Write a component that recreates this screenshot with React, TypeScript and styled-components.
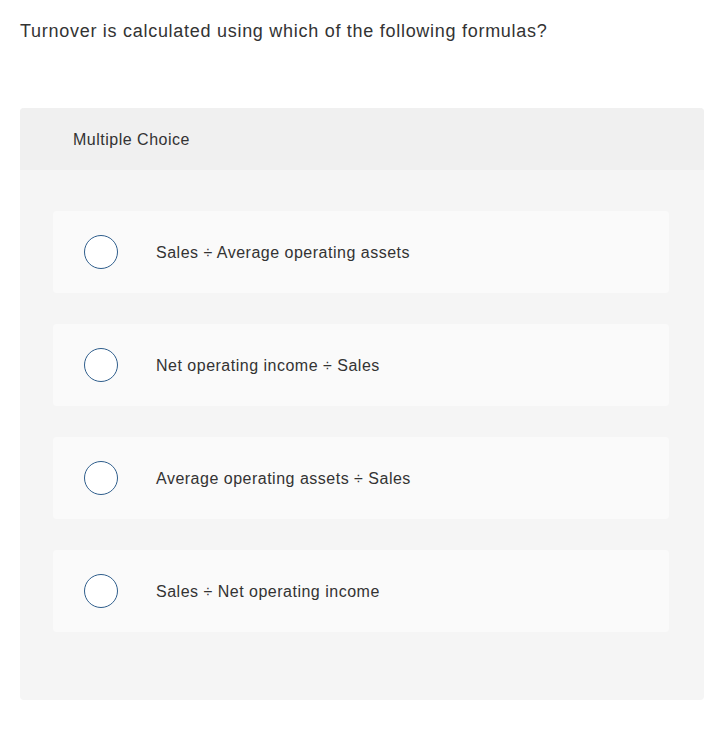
import styled, { createGlobalStyle } from "styled-components";

const GlobalStyle = createGlobalStyle`
  body {
    margin: 0;
    background: #ffffff;
    font-family: "Liberation Sans", Arial, sans-serif;
    color: #333333;
  }
`;

const options = [
  "Sales ÷ Average operating assets",
  "Net operating income ÷ Sales",
  "Average operating assets ÷ Sales",
  "Sales ÷ Net operating income",
];

const App = () => {
  return (
    <Page>
      <GlobalStyle />
      <Question>Turnover is calculated using which of the following formulas?</Question>
      <Panel>
        <PanelHeader>Multiple Choice</PanelHeader>
        <OptionList>
          {options.map((text) => (
            <OptionCard key={text}>
              <Radio />
              <OptionText>{text}</OptionText>
            </OptionCard>
          ))}
        </OptionList>
      </Panel>
    </Page>
  );
};

const Page = styled.div`
  width: 684px;
  padding: 18px 6px 0 20px;
`;

const Question = styled.div`
  font-size: 18px;
  line-height: 26px;
  letter-spacing: 0.72px;
  color: #333333;
`;

const Panel = styled.div`
  margin-top: 64px;
  background: #f5f5f5;
  border-radius: 4px;
  overflow: hidden;
  padding-bottom: 68px;
`;

const PanelHeader = styled.div`
  height: 62px;
  box-sizing: border-box;
  padding-top: 2px;
  background: #f0f0f0;
  display: flex;
  align-items: center;
  padding-left: 53px;
  font-size: 16px;
  letter-spacing: 0.5px;
  color: #333333;
`;

const OptionList = styled.div`
  display: flex;
  flex-direction: column;
  gap: 31px;
  padding: 41px 35px 0 33px;
`;

const OptionCard = styled.div`
  height: 82px;
  background: #fafafa;
  border-radius: 4px;
  display: flex;
  align-items: center;
  padding-left: 31px;
`;

const Radio = styled.span`
  width: 32px;
  height: 32px;
  border: 1.5px solid #2f5e8c;
  border-radius: 50%;
  background: #ffffff;
  flex-shrink: 0;
`;

const OptionText = styled.span`
  margin-left: 38px;
  padding-top: 2px;
  font-size: 16px;
  letter-spacing: 0.5px;
  color: #333333;
`;

export default App;
